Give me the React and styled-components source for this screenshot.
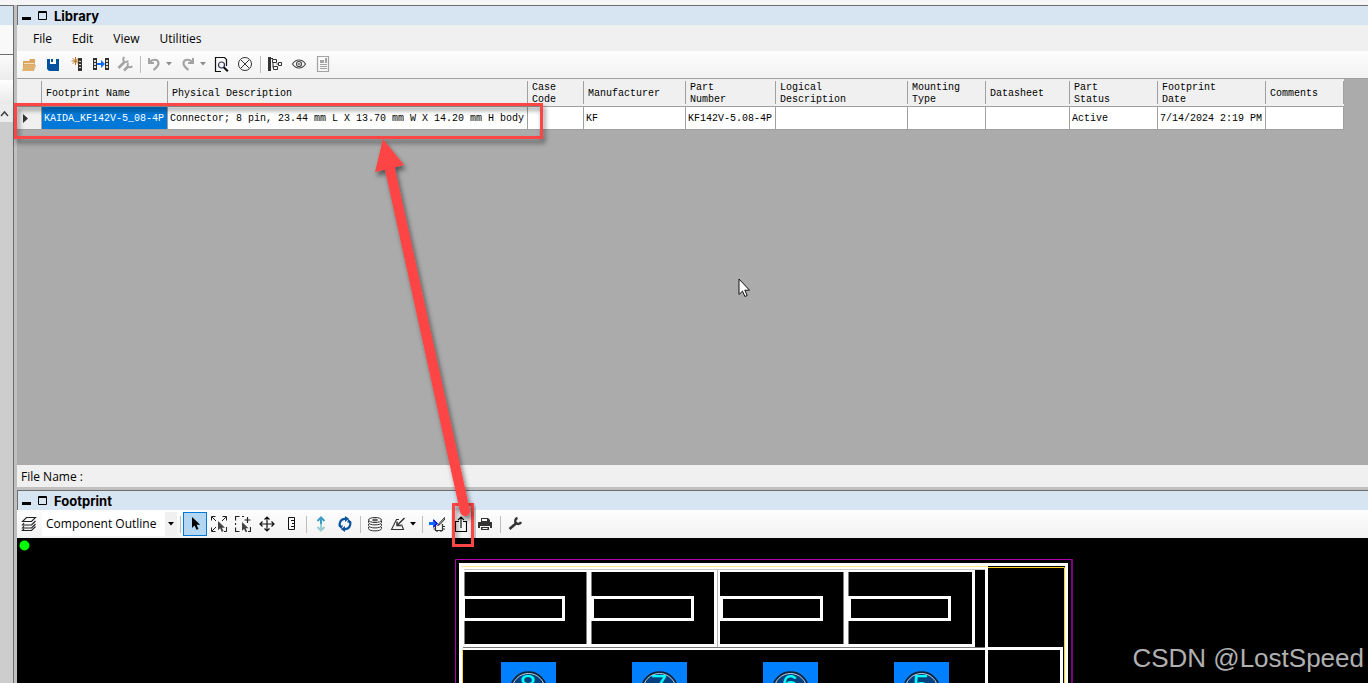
import React from "react";
import styled, { createGlobalStyle, css } from "styled-components";

const GlobalStyle = createGlobalStyle`
  * { box-sizing: border-box; }
  body { margin: 0; background: #c0c0c0; color: #000; font: 12px/16px "Open Sans", "Noto Sans", sans-serif; }
  button, select { font: inherit; color: inherit; }
`;

const LINE = "#a0a0a0";
const RED = "#fe4444";

/* ---------- page frame ---------- */

const Page = styled.div`
  position: relative;
  display: flex;
  flex-direction: column;
  height: 100vh;
  overflow: hidden;
`;
const TopStrip = styled.div`
  flex: 0 0 5px;
  background: #f5f5f5;
`;
const Workspace = styled.div`
  flex: 1;
  min-height: 0;
  display: grid;
  grid-template-columns: 14px minmax(0, 1fr);
  column-gap: 3px;
`;
const Panels = styled.main`
  display: grid;
  grid-template-rows: round(up, 71%, 1px) minmax(0, 1fr);
  row-gap: 3px;
`;

/* ---------- collapsed side dock ---------- */

const Dock = styled.aside`
  display: flex;
  flex-direction: column;
  border-right: 1px solid #6d6d6d;
  background: #cdcdcd;
`;
const DockTitle = styled.div`
  height: 20px;
  border-top: 1px solid #6d6d6d;
  background: #d7e4f1;
`;
const DockMenu = styled.div`
  height: 29px;
  background: #f9f9f9;
`;
const DockBar = styled.div`
  height: 26px;
  border-top: 1px solid #6d6d6d;
  background: linear-gradient(#fbfbfb, #ececec);
`;
const DockHead = styled.div`
  height: 24px;
  background: linear-gradient(#fff, #e8e8e8);
`;
const DockScroll = styled.button`
  height: 18px;
  padding: 2px 0 0;
  border: 0;
  background: #ececec;
  display: flex;
  align-items: center;
`;

/* ---------- panels ---------- */

const Panel = styled.section`
  display: flex;
  flex-direction: column;
  min-height: 0;
`;
const TitleBar = styled.header`
  display: flex;
  align-items: center;
  flex: none;
  height: 20px;
  padding-left: 4px;
  border-top: 1px solid #6d6d6d;
  border-left: 1px solid #6d6d6d;
  background: #d7e4f1;
`;
const TitleButton = styled.button`
  display: flex;
  padding: 0;
  margin-right: 6px;
  border: 0;
  background: none;
`;
const Title = styled.h2`
  margin: 0;
  font: bold 13px/16px "Inter", "Open Sans", sans-serif;
`;
const MenuBar = styled.nav`
  display: flex;
  align-items: center;
  flex: none;
  gap: 20px;
  height: 26px;
  padding: 2px 0 0 16px;
  background: #f0f0f0;
`;
const MenuItem = styled.button`
  padding: 0;
  border: 0;
  background: none;
`;
const ToolBar = styled.div`
  display: flex;
  align-items: center;
  flex: none;
  height: 28px;
  background: linear-gradient(#fdfdfd, #f2f2f2);
  ${(p) =>
    p.$ruled &&
    css`
      padding-bottom: 1px;
      border-bottom: 1px solid ${LINE};
    `}
`;
const ToolButton = styled.button`
  display: flex;
  align-items: center;
  justify-content: center;
  gap: 4px;
  flex: none;
  width: ${(p) => (p.$menu ? 32 : 24)}px;
  height: 24px;
  padding: 0;
  border: 0;
  background: none;
  ${(p) =>
    p.$active &&
    css`
      border: 1px solid #0078d7;
      background: #b3d7f3;
    `}
`;
const Separator = styled.span`
  width: 1px;
  height: 17px;
  margin: 0 2px 0 3px;
  background: #bdbdbd;
`;
const History = styled.div`
  display: flex;
  gap: 2px;
`;
const StatusBar = styled.footer`
  flex: none;
  height: 22px;
  padding: 4px 4px 2px;
  background: #f0f0f0;
`;

/* ---------- library grid ---------- */

const GridArea = styled.div`
  flex: 1;
  min-height: 0;
  overflow: hidden;
  background: #ababab;
`;
const Grid = styled.table`
  width: 1327px;
  table-layout: fixed;
  border-collapse: separate;
  border-spacing: 0;
  font: 10px/12px "Liberation Mono", monospace;
`;
const HeadCell = styled.th`
  height: 28px;
  padding: 3px 4px 0;
  border-bottom: 1px solid ${LINE};
  background: linear-gradient(${LINE}, ${LINE}) right center / 1px 23px no-repeat #f0f0f0;
  font-weight: normal;
  text-align: left;
  vertical-align: middle;
  white-space: pre-line;
`;
const Cell = styled.td`
  height: 23px;
  padding: 2px 0 0 2px;
  border-right: 1px solid ${LINE};
  border-bottom: 1px solid ${LINE};
  background: ${(p) => (p.$selected ? "#0078d7" : "#fff")};
  color: ${(p) => (p.$selected ? "#fff" : "#000")};
  white-space: nowrap;
`;
const RowMarker = styled(Cell)`
  padding-left: 6px;
  background: #f0f0f0;

  > svg { display: block; }
`;

/* ---------- footprint ---------- */

const LayerPicker = styled.label`
  display: grid;
  flex: none;
  width: 135px;
  height: 24px;
  margin-left: 1px;
  background: #fff;

  > * { grid-area: 1 / 1; }
`;
const LayerSelect = styled.select`
  appearance: none;
  width: 116px;
  padding: 0 0 0 4px;
  border: 0;
  outline: 0;
  background: none;
`;
const LayerArrow = styled.span`
  justify-self: end;
  display: flex;
  align-items: center;
  justify-content: center;
  width: 12px;
  background: #f0f0f0;
  pointer-events: none;
`;
const Canvas = styled.div`
  position: relative;
  flex: 1;
  min-height: 0;
  overflow: hidden;
  background: #000;

  > svg { display: block; }
`;
const Watermark = styled.span`
  position: absolute;
  right: 4px;
  bottom: 9px;
  color: #b0b0b0;
  font: 26px/32px "Liberation Sans", Arial, sans-serif;
`;
const Overlay = styled.svg`
  position: absolute;
  top: 0;
  left: 0;
  pointer-events: none;
`;

/* ---------- icons ---------- */

const Icon = ({ children, size = 16, color = "#222" }) => (
  <svg width={size} height={size} viewBox="0 0 16 16" fill="none" stroke={color} strokeWidth="1.2" aria-hidden="true">
    {children}
  </svg>
);
const Caret = ({ color = "#000" }) => (
  <svg width="6" height="4" viewBox="0 0 6 4" aria-hidden="true">
    <path d="M0 0h6L3 3.5z" fill={color} />
  </svg>
);

const cursorPath = "M0 0v11l2.6-2.4 1.9 4.2 2-.9-1.9-4.1h3.6z";

const icons = {
  open: (
    <Icon>
      <path d="M2 14V5h6l1-2h5v7" fill="#d9a55b" stroke="none" />
      <path d="M3 7.500h10.500" stroke="#f6dfb9" />
      <path d="M1 15l2-6h12l-2 6z" fill="#e0b272" stroke="none" />
    </Icon>
  ),
  save: (
    <Icon>
      <path d="M2 3h12v12H4l-2-2z" fill="#00539c" stroke="none" />
      <path d="M5 3h6v5H5z" fill="#fff" stroke="none" />
      <path d="M6 3h2v3H6z" fill="#00539c" stroke="none" />
    </Icon>
  ),
  newPart: (
    <Icon>
      <path d="M9 2h4v13H9z" fill="#333" stroke="none" />
      <path d="M10 5h2v1h-2zM10 8h2v1h-2zM10 11h2v1h-2z" fill="#ddd" stroke="none" />
      <path d="M6.500 1v8M2.500 5h8M3.700 2.200l5.600 5.600M9.300 2.200L3.700 7.800" stroke="#b5772a" strokeWidth="1" />
    </Icon>
  ),
  transfer: (
    <Icon>
      <path d="M0 2h4v12H0zM12 2h4v12h-4z" fill="#2e2e2e" stroke="none" />
      <path d="M1 4h2v2H1zM1 7h2v2H1zM1 10h2v2H1zM13 4h2v2h-2zM13 7h2v2h-2zM13 10h2v2h-2z" fill="#ddd" stroke="none" />
      <path d="M4 7h4V4l4 4-4 4V9H4z" fill="#0a6cff" stroke="none" />
    </Icon>
  ),
  tools: (
    <Icon color="#a3a3a3">
      <path d="M1.500 12l6-6" strokeWidth="2.600" />
      <path d="M7.500 1.200a2.600 2.600 0 1 0 3.600 3.400" strokeWidth="1.900" />
      <path d="M7 14.500l4-4" strokeWidth="2.600" />
      <path d="M11.500 7a2.400 2.400 0 1 0 3.600 3" strokeWidth="1.900" />
    </Icon>
  ),
  undo: (
    <Icon color="#a3a3a3">
      <path d="M3 2v5h5" strokeWidth="2" />
      <path d="M3.500 6.500C6 3 12 2.500 12.500 7c.3 3-2.500 5-5 7" strokeWidth="2.200" />
    </Icon>
  ),
  redo: (
    <Icon color="#a3a3a3">
      <path d="M13 2v5H8" strokeWidth="2" />
      <path d="M12.500 6.500C10 3 4 2.500 3.500 7c-.3 3 2.500 5 5 7" strokeWidth="2.200" />
    </Icon>
  ),
  preview: (
    <Icon color="#111">
      <path d="M8 15.500H2.500v-14h9l2 2V10" />
      <circle cx="8.500" cy="9" r="3" stroke="#335" />
      <path d="M10.800 11.300l4 4" strokeWidth="2" />
    </Icon>
  ),
  cancel: (
    <Icon color="#333">
      <circle cx="8" cy="8" r="6.500" strokeWidth="1" />
      <path d="M4 4l8 8M12 4l-8 8" strokeWidth="1" />
    </Icon>
  ),
  tree: (
    <Icon color="#333">
      <path d="M1 1h3v14H1z" fill="#333" stroke="none" />
      <path d="M4 2.500h2M5.500 3.500h4v3h-4zM11.500 6.500h3v3h-3zM6.500 10.500h4v3h-4zM6 6.500v5M9.500 8h2" strokeWidth="1" />
    </Icon>
  ),
  eye: (
    <Icon color="#444">
      <path d="M1.500 8Q4 4 8 4t6.500 4Q12 12 8 12T1.500 8z" />
      <circle cx="8" cy="8" r="2.500" />
      <path d="M8 7v2" />
    </Icon>
  ),
  report: (
    <Icon color="#a3a3a3">
      <path d="M2.500 .5h11v15h-11z" />
      <path d="M5 4h4v3H5zM10 2h2v5h-2z" fill="#a3a3a3" stroke="none" />
      <path d="M5 8.500h7M5 10.500h7M5 12.500h7" />
    </Icon>
  ),
  layers: (
    <Icon>
      <path d="M5.500 1.500h9l-4 4h-9zM3 7l-1.500 2h9l4-4M3 10l-1.500 2h9l4-4M3 13l-1.500 1.500h9l4-4" strokeWidth="1.100" />
    </Icon>
  ),
  pointer: (
    <Icon>
      <path d={cursorPath} transform="translate(5 1)" fill="#000" stroke="none" />
    </Icon>
  ),
  selectAll: (
    <Icon>
      <path d="M.5 4.500v-4h4M1 1l4 4M11.500 .5h4v4M15 1l-4 4M.5 11.500v4h4M1 15l4-4M15.500 11v4.500H13" strokeWidth="1" />
      <path d={cursorPath} transform="translate(7 5) scale(.85)" fill="#444" stroke="none" />
    </Icon>
  ),
  selectAdd: (
    <Icon>
      <path d="M.5 4.500v-4h4M.5 11.500v4h4M15.500 11v4.500H13M7 .5h2M.5 7v2M12.500 1v6M9.500 4h6" strokeWidth="1.200" />
      <path d={cursorPath} transform="translate(7 6) scale(.8)" fill="#444" stroke="none" />
    </Icon>
  ),
  move: (
    <Icon color="#111">
      <path d="M8 1v14M1 8h14M5.500 3.500L8 1l2.500 2.500M5.500 12.500L8 15l2.500-2.500M3.500 5.500L1 8l2.500 2.500M12.500 5.500L15 8l-2.500 2.500" strokeWidth="1.200" />
    </Icon>
  ),
  ruler: (
    <Icon color="#111">
      <path d="M5.500 1.500h6v12h-6zM8 4.500h3M9 7.500h2M8 10.500h3" strokeWidth="1" />
    </Icon>
  ),
  stretch: (
    <Icon color="#3b9dc4">
      <path d="M8 2v7M4.500 5L8 1.500 11.500 5" strokeWidth="2" />
      <path d="M8 8v6M4.500 11L8 14.500l3.500-3.500" stroke="#9acdd3" strokeWidth="2" />
    </Icon>
  ),
  refresh: (
    <Icon color="#0a539e">
      <path d="M3.200 10.500A5.300 5.300 0 0 1 8 2.800M12.800 5.500A5.300 5.300 0 0 1 8 13.200" strokeWidth="2.200" />
      <path d="M8 0l4 2.800L8 6zM8 10l-4 3.200L8 16zM1 9.500h5L4.500 13zM15 6.500h-5L11.500 3z" fill="#0a539e" stroke="none" />
    </Icon>
  ),
  stack: (
    <Icon color="#333">
      <ellipse cx="8" cy="4" rx="6.500" ry="2.500" strokeWidth="1" />
      <ellipse cx="8" cy="4" rx="2.500" ry=".8" strokeWidth="1" />
      <path d="M1.500 5v1.500c0 3.200 13 3.200 13 0V5M1.500 8v1.500c0 3.200 13 3.200 13 0V8M1.500 11v1.500c0 3.200 13 3.200 13 0V11" strokeWidth="1" />
    </Icon>
  ),
  draft: (
    <Icon color="#333">
      <path d="M9 3.500H6.500l-5 10h12l-2-5" strokeWidth="1.100" />
      <path d="M14.500 2L8 8.500M7 5.500v4h4" strokeWidth="1.500" />
    </Icon>
  ),
  editPart: (
    <Icon color="#333">
      <path d="M6.500 6v8.500h7V8M4.500 10.500h2M4.500 13h2M13.500 10.500H16M13.500 13H16M8 16v-2M12 16v-2" />
      <path d="M15.500 1.500l-5.500 6-1.500 2 2.500-1 5-5.500z" fill="#bbb" strokeWidth="1" />
      <path d="M0 6h4V3l5 4.500L4 12V9H0z" fill="#0a6cff" stroke="none" />
      <path d="M4.500 4L8 7.500 4.500 11" stroke="#2b00d9" />
    </Icon>
  ),
  share: (
    <Icon color="#000">
      <path d="M6 5.500H2.500v10h11v-10H10M8 12V1M5 4l3-3 3 3" strokeWidth="1.100" />
    </Icon>
  ),
  print: (
    <Icon>
      <path d="M4 2h7l2 2v2H4zM1 6h14v6h-2v-2H3v2H1zM4 11h8v3H4z" fill="#333" stroke="none" />
      <path d="M5 3h5v2H5zM5.500 12h5v1h-5z" fill="#f8f8f8" stroke="none" />
    </Icon>
  ),
  wrench: (
    <Icon color="#333">
      <path d="M2.500 13l7-6" strokeWidth="2.600" />
      <path d="M10.500 2a3 3 0 1 0 3.500 4" strokeWidth="2.400" />
    </Icon>
  ),
};

const Tool = ({ icon, label, menu, muted, active }) => (
  <ToolButton type="button" aria-label={label} $menu={menu} $active={active}>
    {icons[icon]}
    {menu && <Caret color={muted ? "#8c8c8c" : "#000"} />}
  </ToolButton>
);

const PanelTitle = ({ children }) => (
  <TitleBar>
    <TitleButton type="button" aria-label="Minimize">
      <svg width="10" height="10"><path d="M0 6h9v3H0z" /></svg>
    </TitleButton>
    <TitleButton type="button" aria-label="Maximize">
      <svg width="10" height="10"><path d="M.5 .5h8v8h-8zM0 1.500h9" fill="none" stroke="#000" /></svg>
    </TitleButton>
    <Title>{children}</Title>
  </TitleBar>
);

/* ---------- data ---------- */

const columns = [
  { label: "Footprint Name", width: 126, value: "KAIDA_KF142V-5_08-4P", selected: true },
  { label: "Physical Description", width: 360, value: "Connector; 8 pin, 23.44 mm L X 13.70 mm W X 14.20 mm H body" },
  { label: "Case\nCode", width: 56, value: "" },
  { label: "Manufacturer", width: 102, value: "KF" },
  { label: "Part\nNumber", width: 90, value: "KF142V-5.08-4P" },
  { label: "Logical\nDescription", width: 132, value: "" },
  { label: "Mounting\nType", width: 78, value: "" },
  { label: "Datasheet", width: 84, value: "" },
  { label: "Part\nStatus", width: 88, value: "Active" },
  { label: "Footprint\nDate", width: 108, value: "7/14/2024 2:19 PM" },
  { label: "Comments", width: 78, value: "" },
];

const pads = ["8", "7", "6", "5"];

/* ---------- footprint outline ---------- */

const Outline = () => (
  <svg width="1351" height="146" aria-label="Footprint outline">
    <circle cx="7.500" cy="7.500" r="5" fill="#00ff00" />
    <g fill="none">
      <path d="M438.500 146V21.500H1055" stroke="#b000b0" />
      <path d="M1055 21v125" stroke="#800080" strokeWidth="2" />
      {/* outer body */}
      <path d="M443.500 146V26.500H1049.500V146" stroke="#fff" strokeWidth="3" />
      <path d="M446 28v83M446 28.500H971" stroke="#fff" strokeWidth="3" />
      <path d="M442 30.500H971" stroke="#fff" strokeWidth="7" />
      <path d="M445 28.500H971" stroke="#ffeb8c" />
      <path d="M971 29.500h76.500V146M445.500 112v34" stroke="#ffd21e" />
      <path d="M447 31.500H968" stroke="#c8c8c8" />
      <path d="M958 32h10v3h-10z" fill="#000" />
      {/* lower rails */}
      <path d="M442 107.500h516" stroke="#fff" strokeWidth="3" />
      <path d="M446 109.500h523" stroke="#777" />
      <path d="M445 111h524" stroke="#fff" strokeWidth="2" />
      <path d="M969.500 31v115M956.500 32v77M971 110.500h74M1044.500 109v37" stroke="#fff" strokeWidth="3" />
      {/* chamber walls */}
      <path d="M572 34v74M829 34v74" stroke="#fff" strokeWidth="5" />
      <path d="M700 34v74" stroke="#fff" strokeWidth="6" />
      <path d="M700.500 32v77" stroke="#bbb" />
      {/* wire slots */}
      {[446, 575, 704, 832].map((x) => (
        <path key={x} d={`M${x + 0.5} 59.500h100v22h-100z`} stroke="#fff" strokeWidth="3" />
      ))}
    </g>
    {pads.map((pin, i) => (
      <g key={pin} transform={`translate(${484 + i * 131} 124)`}>
        <path d="M0 0h55v30H0z" fill="#0080ff" />
        <circle cx="27.500" cy="28" r="18" fill="#004080" stroke="#123" strokeWidth="1.500" />
        <circle cx="27.500" cy="28" r="16.500" fill="none" stroke="#c4ccd4" />
        <text x="27" y="33" fill="#00ffff" fontSize="30" fontFamily="Liberation Sans" textAnchor="middle">
          {pin}
        </text>
      </g>
    ))}
  </svg>
);

/* ---------- annotations ---------- */

const Annotations = () => (
  <Overlay width="640" height="560" aria-hidden="true">
    <defs>
      <filter id="shade" x="-10%" y="-20%" width="125%" height="150%">
        <feDropShadow dx="2" dy="4" stdDeviation="2.500" floodColor="#000" floodOpacity=".5" />
      </filter>
    </defs>
    <g filter="url(#shade)">
      <path d="M15.500 104.500h526v33h-526z" fill="none" stroke={RED} strokeWidth="3" />
    </g>
    <g filter="url(#shade)">
      <path d="M453.500 504.500h19v41h-19z" fill="none" stroke={RED} strokeWidth="3" />
    </g>
    <g filter="url(#shade)">
      <path d="M388 160L465 511" stroke={RED} strokeWidth="10" strokeLinecap="round" />
      <path d="M383 139l21 26-29 7z" fill={RED} />
    </g>
  </Overlay>
);

const MouseCursor = styled.svg`
  position: absolute;
  top: 278px;
  left: 738px;
  pointer-events: none;
`;

export default function App() {
  return (
    <Page>
      <GlobalStyle />
      <TopStrip />
      <Workspace>
        <Dock>
          <DockTitle />
          <DockMenu />
          <DockBar />
          <DockHead />
          <DockScroll type="button" aria-label="Scroll up">
            <svg width="10" height="8"><path d="M1 6l3.500-4L8 6" fill="none" stroke="#444" strokeWidth="1.500" /></svg>
          </DockScroll>
        </Dock>
        <Panels>
          <Panel>
            <PanelTitle>Library</PanelTitle>
            <MenuBar>
              {["File", "Edit", "View", "Utilities"].map((name) => (
                <MenuItem type="button" key={name}>{name}</MenuItem>
              ))}
            </MenuBar>
            <ToolBar $ruled>
              <Tool icon="open" label="Open" />
              <Tool icon="save" label="Save" />
              <Tool icon="newPart" label="New part" />
              <Tool icon="transfer" label="Transfer" />
              <Tool icon="tools" label="Tools" />
              <Separator />
              <History>
                <Tool icon="undo" label="Undo" menu muted />
                <Tool icon="redo" label="Redo" menu muted />
              </History>
              <Tool icon="preview" label="Preview" />
              <Tool icon="cancel" label="Cancel" />
              <Separator />
              <Tool icon="tree" label="Structure" />
              <Tool icon="eye" label="Show" />
              <Tool icon="report" label="Report" />
            </ToolBar>
            <GridArea>
              <Grid>
                <colgroup>
                  <col width="25" />
                  {columns.map((c) => <col key={c.label} width={c.width} />)}
                </colgroup>
                <thead>
                  <tr>
                    <HeadCell aria-label="Row" />
                    {columns.map((c) => <HeadCell key={c.label} scope="col">{c.label}</HeadCell>)}
                  </tr>
                </thead>
                <tbody>
                  <tr>
                    <RowMarker>
                      <svg width="6" height="10"><path d="M0 0l5 4.500L0 9z" fill="#333" /></svg>
                    </RowMarker>
                    {columns.map((c) => <Cell key={c.label} $selected={c.selected}>{c.value}</Cell>)}
                  </tr>
                </tbody>
              </Grid>
            </GridArea>
            <StatusBar>File Name :</StatusBar>
          </Panel>
          <Panel>
            <PanelTitle>Footprint</PanelTitle>
            <ToolBar>
              <Tool icon="layers" label="Layers" />
              <LayerPicker>
                <LayerSelect aria-label="Layer" defaultValue="Component Outline">
                  <option>Component Outline</option>
                </LayerSelect>
                <LayerArrow><Caret /></LayerArrow>
              </LayerPicker>
              <Separator />
              <Tool icon="pointer" label="Select" active />
              <Tool icon="selectAll" label="Select all" />
              <Tool icon="selectAdd" label="Add to selection" />
              <Tool icon="move" label="Move" />
              <Tool icon="ruler" label="Measure" />
              <Separator />
              <Tool icon="stretch" label="Stretch" />
              <Tool icon="refresh" label="Rotate" />
              <Separator />
              <Tool icon="stack" label="Pad stacks" />
              <Tool icon="draft" label="Drafting" menu />
              <Separator />
              <Tool icon="editPart" label="Edit part" />
              <Tool icon="share" label="Export" />
              <Tool icon="print" label="Print" />
              <Separator />
              <Tool icon="wrench" label="Options" />
            </ToolBar>
            <Canvas>
              <Outline />
              <Watermark>CSDN @LostSpeed</Watermark>
            </Canvas>
          </Panel>
        </Panels>
      </Workspace>
      <Annotations />
      <MouseCursor width="14" height="20" aria-hidden="true">
        <path d="M1 1v15.500l3.500-3.400 2.400 5.400 2.300-1-2.400-5.300h4.700z" fill="#fff" stroke="#111" />
      </MouseCursor>
    </Page>
  );
}
